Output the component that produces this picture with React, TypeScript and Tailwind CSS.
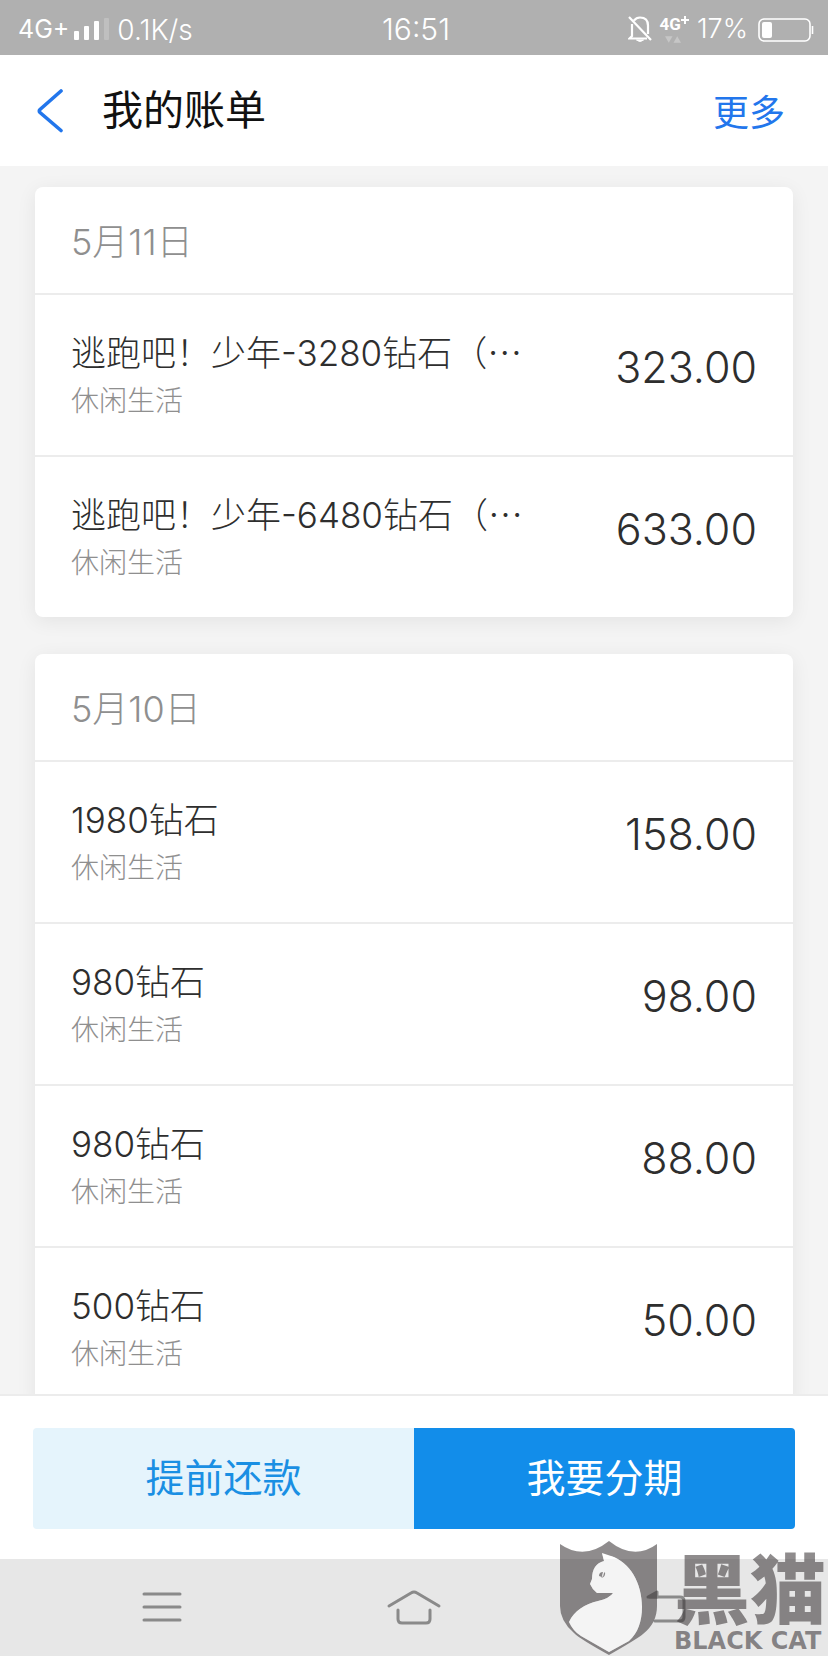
import type { ReactNode } from 'react';

type Bill = { title: string; category: string; amount: string };
type Group = { date: string; bills: Bill[] };

const groups: Group[] = [
  {
    date: '5月11日',
    bills: [
      { title: '逃跑吧！少年-3280钻石（⋯', category: '休闲生活', amount: '323.00' },
      { title: '逃跑吧！少年-6480钻石（⋯', category: '休闲生活', amount: '633.00' },
    ],
  },
  {
    date: '5月10日',
    bills: [
      { title: '1980钻石', category: '休闲生活', amount: '158.00' },
      { title: '980钻石', category: '休闲生活', amount: '98.00' },
      { title: '980钻石', category: '休闲生活', amount: '88.00' },
      { title: '500钻石', category: '休闲生活', amount: '50.00' },
    ],
  },
];

function StatusBar() {
  return (
    <div className="grid h-[55px] shrink-0 grid-cols-[1fr_auto_1fr] items-center bg-[#b0b0b0] pt-1 pr-[14px] pl-[18px] font-normal text-white">
      <div className="flex items-center">
        <span className="text-[25px]">4G+</span>
        <svg className="ml-1 h-6 w-9" viewBox="0 0 36 24" fill="currentColor">
          <rect x="1" y="13" width="5" height="9" rx="1" />
          <rect x="11" y="8" width="5" height="14" rx="1" />
          <rect x="21" y="3" width="5" height="19" rx="1" />
          <rect x="31" y="0" width="5" height="22" rx="1" opacity=".2" />
        </svg>
        <span className="ml-2 text-[28px] font-light">0.1K/s</span>
      </div>
      <span className="text-[30px] font-light">16:51</span>
      <div className="flex items-center justify-end">
        <svg className="h-7 w-6" viewBox="0 0 24 28" fill="none" stroke="currentColor" strokeWidth="2.2">
          <path d="M6 4.5C7.5 2.500 9.500 1.500 12 1.500c5 0 8 3 8 8V18M4 8v12L1.500 22.500H19M1 1l22 23" />
          <path d="M8.500 24q3.500 3 7 0z" fill="currentColor" strokeWidth="1" />
        </svg>
        <div className="ml-2 flex items-start">
          <div className="flex flex-col items-end gap-1">
            <span className="font-['Roboto'] text-[17px] leading-4 font-bold">4G</span>
            <svg className="h-2 w-4" viewBox="0 0 17 8" fill="#c6c6c6">
              <path d="M0 0h8l-4 7zM9 7h8l-4-7z" />
            </svg>
          </div>
          <svg className="h-2 w-2" viewBox="0 0 8 8" fill="none" stroke="currentColor" strokeWidth="2">
            <path d="M4 0v8M0 4h8" />
          </svg>
        </div>
        <span className="ml-2 text-[27px] font-light">17%</span>
        <svg className="ml-[10px] h-6 w-14" viewBox="0 0 56 24" fill="none" stroke="currentColor" strokeWidth="1.600">
          <rect x="1" y="1" width="51" height="22" rx="5" />
          <rect x="4" y="4" width="10" height="16" rx="2" fill="currentColor" stroke="none" />
          <path d="M54.500 8v8" />
        </svg>
      </div>
    </div>
  );
}

function Header() {
  return (
    <header className="flex h-[111px] shrink-0 items-center bg-white pr-[43px] pl-[37px]">
      <button type="button" aria-label="返回" className="mr-[37px] text-[#2276ec]">
        <svg className="h-11 w-7" viewBox="0 0 28 44" fill="none" stroke="currentColor" strokeWidth="3.600" strokeLinecap="round">
          <path d="M24 2L3 20.500q-1.500 1.500 0 3L24 41.500" />
        </svg>
      </button>
      <h1 className="text-[41px] leading-none font-normal text-[#111]">我的账单</h1>
      <a href="#more" className="ml-auto pt-1 text-[36px] leading-none font-normal text-[#2276ec]">
        更多
      </a>
    </header>
  );
}

function BillRow({ title, category, amount }: Bill) {
  return (
    <li className="flex h-[162px] items-center justify-between border-b-2 border-[#ececec] px-9 last:h-[160px] last:border-b-0">
      <div className="min-w-0 pt-1">
        <div className="truncate text-[35px] leading-[48px] text-[#2e2e2e]">{title}</div>
        <div className="text-[28px] leading-[48px] text-[#8f8f8f]">{category}</div>
      </div>
      <div className="pb-4 text-[43px] leading-none text-[#2e2e2e]">{amount}</div>
    </li>
  );
}

function BillCard({ date, bills }: Group) {
  return (
    <section className="shrink-0 rounded-lg bg-white shadow-[0_4px_20px_rgba(0,0,0,0.07)]">
      <h2 className="flex h-[108px] items-center border-b-2 border-[#ececec] px-9 pt-1 text-[36px] text-[#8f8f8f]">
        {date}
      </h2>
      <ul>
        {bills.map((bill, i) => (
          <BillRow key={i} {...bill} />
        ))}
      </ul>
    </section>
  );
}

function ActionBar() {
  return (
    <div className="flex shrink-0 border-t-2 border-[#ececec] bg-white px-[33px] pt-8 pb-[30px] text-[39px] font-normal">
      <button type="button" className="h-[101px] flex-1 rounded-l-sm bg-[#e5f4fc] text-[#1a8fe3]">
        提前还款
      </button>
      <button type="button" className="h-[101px] flex-1 rounded-r-sm bg-[#128dea] text-white">
        我要分期
      </button>
    </div>
  );
}

function NavIcon({ label, children }: { label: string; children: ReactNode }) {
  return (
    <button type="button" aria-label={label} className="text-[#8a8a8a]">
      <svg className="h-10 w-14" viewBox="0 0 56 40" fill="none" stroke="currentColor" strokeWidth="3" strokeLinecap="round" strokeLinejoin="round">
        {children}
      </svg>
    </button>
  );
}

function NavBar() {
  return (
    <nav className="flex h-[97px] shrink-0 items-center justify-between bg-[#e7e7e7] px-[134px]">
      <NavIcon label="菜单">
        <path d="M10 6h36M10 19h36M10 32h36" />
      </NavIcon>
      <NavIcon label="主页">
        <path d="M3 18L25 5q3-2 6 0l22 13M12 22v9q0 4 4 4h24q4 0 4-4v-9" />
      </NavIcon>
      <NavIcon label="后退">
        <path d="M12 9h30q4 0 4 4v16q0 4-4 4H17" />
        <path d="M10 9l9-5v5z" fill="currentColor" />
      </NavIcon>
    </nav>
  );
}

function Watermark() {
  return (
    <div className="pointer-events-none absolute right-[2px] bottom-0 flex items-end text-[#3a3537]/57">
      <svg className="h-[115px] w-[98px]" viewBox="0 0 98 115" fill="currentColor">
        <path
          fillRule="evenodd"
          d="M0 3Q24 20 49 0Q74 20 97 3V65Q97 82 83 93Q77 98 49 114Q20 98 14 92Q0 80 0 65ZM42 12L51 15C70 21 82 42 82 66C82 80 78 92 69 100L49 111L21 95Q13 90 9 81C14 70 25 63 38 60Q50 57 53 52L37 52Q32 48 30 43L32 38C32 28 36 22 44 20Z"
        />
        <path
          d="M42 12L45 16L51 15C70 21 82 42 82 66C82 80 78 92 69 100L49 111L21 95Q13 90 9 81C14 70 25 63 38 60Q50 57 53 52L37 52Q32 48 30 43L32 38C32 28 36 22 44 20Z"
          fill="#fff"
          opacity=".55"
        />
        <path d="M39 35q0-4 4-4q-1 3-1 5zM45 31q1 5-4 6q3-2 3-5z" />
      </svg>
      <div className="ml-4 flex flex-col">
        <span className="text-[76px] leading-[72px] font-black">黑猫</span>
        <span className="font-['DejaVu_Sans'] text-[24px] leading-[30px] font-bold">BLACK CAT</span>
      </div>
    </div>
  );
}

export default function App() {
  return (
    <div
      lang="zh-CN"
      className="relative flex h-screen flex-col overflow-hidden bg-[#f4f4f4] font-['Inter','Noto_Sans_CJK_SC',sans-serif] font-light"
    >
      <StatusBar />
      <Header />
      <main className="flex min-h-0 flex-1 flex-col gap-[37px] overflow-hidden px-[35px] pt-[21px]">
        {groups.map((group) => (
          <BillCard key={group.date} {...group} />
        ))}
      </main>
      <ActionBar />
      <NavBar />
      <Watermark />
    </div>
  );
}
